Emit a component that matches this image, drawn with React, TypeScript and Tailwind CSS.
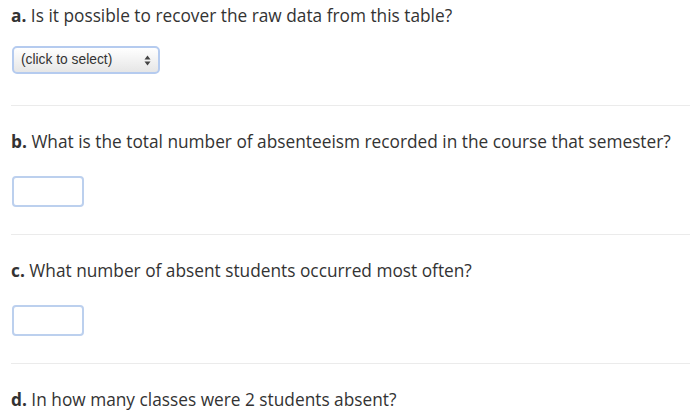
export default function App() {
  const questions = [
    { label: "b.", text: "What is the total number of absenteeism recorded in the course that semester?" },
    { label: "c.", text: "What number of absent students occurred most often?" },
  ]

  return (
    <div className="w-[691px] h-[416px] overflow-hidden bg-white pl-[11px] pr-[1px] font-['Open_Sans',sans-serif] text-[17.3px] leading-[24px] text-[#333333]">
      {/* Question a */}
      <div className="pt-[4px] border-b border-[#ebebeb]">
        <p>
          <span className="font-bold">a.</span> Is it possible to recover the raw data from this table?
        </p>
        <div className="mt-[18px] mb-[31px] ml-[1px] w-[148px] h-[28px] rounded-[5px] border-2 border-[#b5cbef] bg-gradient-to-b from-white to-[#e6e6e6] flex items-center justify-between pl-[7px] pr-[7px] font-['Liberation_Sans',Arial,sans-serif] text-[13.8px] leading-none text-[#333]">
          <span>(click to select)</span>
          <svg width="7" height="11" viewBox="0 0 7 11">
            <path d="M3.5 0.5 L6.5 4.5 L0.5 4.5 Z" fill="#444" />
            <path d="M3.5 10.5 L6.5 6.5 L0.5 6.5 Z" fill="#444" />
          </svg>
        </div>
      </div>

      {questions.map((q) => (
        <div key={q.label} className="pt-[24px] border-b border-[#ebebeb]">
          <p>
            <span className="font-bold">{q.label}</span> {q.text}
          </p>
          <div className="mt-[22px] mb-[27px] ml-[1px] w-[72px] h-[31px] rounded-[4px] border-2 border-[#bcd0ee] bg-white" />
        </div>
      ))}

      {/* Question d */}
      <div className="pt-[24px]">
        <p>
          <span className="font-bold">d.</span> In how many classes were 2 students absent?
        </p>
      </div>
    </div>
  )
}
